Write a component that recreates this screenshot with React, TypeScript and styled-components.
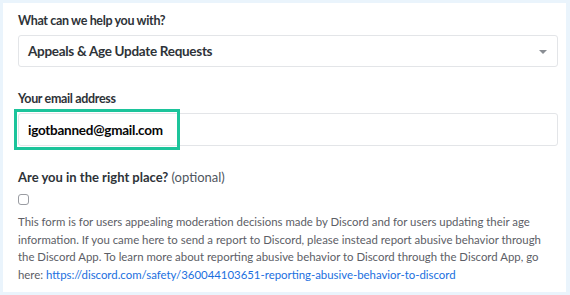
import React from "react";
import styled, { createGlobalStyle } from "styled-components";

const Global = createGlobalStyle`
  html, body { margin: 0; padding: 0; background: #eaf4fc; }
  body { font-family: Lato, "Noto Sans", sans-serif; }
`;

const Page = styled.div`
  width: 570px;
  height: 295px;
  padding: 3px 4px 3px 3px;
  box-sizing: border-box;
`;

const Panel = styled.div`
  background: #ffffff;
  height: 100%;
  box-sizing: border-box;
  padding: 10px 8px 0 15px;
  display: flex;
  flex-direction: column;
`;

const Field = styled.div<{ $gap?: number }>`
  display: flex;
  flex-direction: column;
  margin-bottom: ${(p) => p.$gap ?? 0}px;
`;

const Label = styled.label<{ $big?: boolean }>`
  font-size: ${(p) => (p.$big ? 13 : 12.5)}px;
  letter-spacing: ${(p) => (p.$big ? 0 : -0.35)}px;
  line-height: 16px;
  font-weight: 700;
  color: #2e3338;
  margin-bottom: ${(p) => (p.$big ? 0 : 6)}px;
`;

const Optional = styled.span`
  font-weight: 400;
  color: #4f5660;
`;

const Box = styled.div<{ $h: number }>`
  position: relative;
  height: ${(p) => p.$h}px;
  border: 1px solid #e3e5e8;
  border-radius: 3px;
  box-sizing: border-box;
  display: flex;
  align-items: center;
  padding: 0 9px;
  font-size: 13.5px;
  letter-spacing: -0.3px;
  font-weight: 700;
  color: #2e3338;
`;

const Arrow = styled.span`
  position: absolute;
  right: 10px;
  top: 14px;
  width: 0;
  height: 0;
  border-left: 4px solid transparent;
  border-right: 4px solid transparent;
  border-top: 4px solid #8a8e94;
`;

const Highlight = styled.div`
  position: absolute;
  left: -5px;
  top: -5px;
  width: 166px;
  height: 41px;
  border: 3px solid #1cc49b;
  box-sizing: border-box;
  pointer-events: none;
`;

const EmailText = styled.span`
  color: #060607;
  font-weight: 700;
  letter-spacing: -0.25px;
`;

const Check = styled.span`
  display: block;
  width: 11px;
  height: 11px;
  border: 1px solid #9a9ca2;
  border-radius: 3px;
  box-sizing: border-box;
  margin: 9px 0 8px 0;
`;

const Note = styled.p`
  margin: 0;
  padding-right: 6px;
  font-size: 11.4px;
  line-height: 17.5px;
  color: #5c5e66;
`;

const Link = styled.a`
  color: #1a6fe0;
  text-decoration: none;
`;

export default function App() {
  return (
    <Page>
      <Global />
      <Panel>
        <Field $gap={24}>
          <Label>What can we help you with?</Label>
          <Box $h={32}>
            Appeals &amp; Age Update Requests
            <Arrow />
          </Box>
        </Field>
        <Field $gap={23}>
          <Label>Your email address</Label>
          <Box $h={33}>
            <EmailText>igotbanned@gmail.com</EmailText>
            <Highlight />
          </Box>
        </Field>
        <Field>
          <Label $big>
            Are you in the right place? <Optional>(optional)</Optional>
          </Label>
          <Check />
          <Note>
            This form is for users appealing moderation decisions made by Discord and for users updating their age
            information. If you came here to send a report to Discord, please instead report abusive behavior through
            the Discord App. To learn more about reporting abusive behavior to Discord through the Discord App, go
            here:{" "}
            <Link href="#">https://discord.com/safety/360044103651-reporting-abusive-behavior-to-discord</Link>
          </Note>
        </Field>
      </Panel>
    </Page>
  );
}
